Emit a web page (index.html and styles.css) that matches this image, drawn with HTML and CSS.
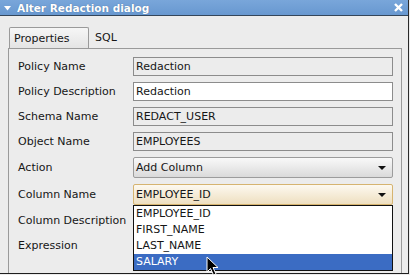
FILE: index.html
```html
<!DOCTYPE html>
<html lang="en">
    <head>
        <meta charset="utf-8" />
        <title>Alter Redaction dialog</title>
        <link rel="stylesheet" href="styles.css">
    </head>
    <body>
        <div class="window">
            <div class="titlebar">
                <svg class="tri" width="7" height="5" viewBox="0 0 7 5"><path d="M0 0H7L3.5 4.5Z" fill="#fff"/></svg>
                <span class="title">Alter Redaction dialog</span>
                <svg class="close" width="9" height="9" viewBox="0 0 9 9"><path d="M1 1L8 8M8 1L1 8" stroke="#fff" stroke-width="2.4"/></svg>
            </div>
            <div class="body">
                <div class="tabs">
                    <span class="tab active">Properties</span>
                    <span class="tab">SQL</span>
                </div>
                <div class="panel">
                    <div class="form">
                        <label>Policy Name</label>
                        <div class="field ro">Redaction</div>

                        <label>Policy Description</label>
                        <div class="field">Redaction</div>

                        <label>Schema Name</label>
                        <div class="field ro">REDACT_USER</div>

                        <label>Object Name</label>
                        <div class="field ro">EMPLOYEES</div>

                        <label>Action</label>
                        <div class="combo">Add Column<span class="arrow"></span></div>

                        <label>Column Name</label>
                        <div class="combo focus">EMPLOYEE_ID<span class="arrow"></span>
                            <ul class="list">
                                <li>EMPLOYEE_ID</li>
                                <li>FIRST_NAME</li>
                                <li>LAST_NAME</li>
                                <li class="sel">SALARY</li>
                            </ul>
                        </div>

                        <label>Column Description</label>
                        <div class="field"></div>

                        <label>Expression</label>
                        <div class="field"></div>
                    </div>
                </div>
            </div>
        </div>
        <svg class="cursor" width="13" height="20" viewBox="0 0 13 20"><path d="M1 1V16L4.5 12.5L7.5 19L10 18L7 11.5H12Z" fill="#000" stroke="#fff" stroke-width="1"/></svg>
    </body>
</html>
```

FILE: styles.css
```css
* { margin: 0; padding: 0; box-sizing: border-box; }
body { font-family: "DejaVu Sans", sans-serif; font-size: 11px; color: #161616; background: #ececec; overflow: hidden; }

.window {
    position: relative;
    width: 409px;
    height: 274px;
    background: #ececec;
    border-right: 1px solid #2a2a2a;
    border-bottom: 1px solid #1e1e1e;
    overflow: hidden; }

.titlebar {
    height: 16px;
    display: flex;
    align-items: center;
    background: linear-gradient(#79a6da, #6898d0);
    border-bottom: 1px solid #34465a;
    color: #fff; }
.titlebar .tri { margin: 1px 0 0 4px; }
.titlebar .title { margin-left: 6px; font-weight: bold; font-size: 10.5px; text-shadow: 0 0 1px #41648f; }
.titlebar .close { margin-left: auto; margin-right: 5px; }

.body { padding: 11px 0 0 8px; }

.tabs { display: flex; padding-left: 1px; height: 21px; }
.tab { padding: 4px 0 0 6px; width: 80px; }
.tab.active {
    width: 80px;
    padding-left: 4px;
    border: 1px solid #9a9a9a;
    border-bottom: none;
    border-radius: 2px 2px 0 0;
    background: linear-gradient(#f6f6f6, #e4e4e4); }
.tab + .tab { padding-left: 6px; }

.panel {
    width: 394px;
    height: 230px;
    border: 1px solid #9a9a9a;
    border-bottom: none;
    padding: 8px 7px 0 9px; }

.form {
    display: grid;
    grid-template-columns: 115px 260px;
    grid-template-rows: 19px 19px 19px 19px 21px 21px 19px 19px;
    row-gap: 6px;
    align-items: center; }
.form label { white-space: nowrap; }

.field {
    height: 19px;
    border: 1px solid #8c8c8c;
    background: #fff;
    padding: 2px 2px 0; }
.field.ro { background: #ececec; }

.combo {
    position: relative;
    height: 21px;
    border: 1px solid #9c9c9c;
    border-radius: 2px;
    padding: 3px 2px 0;
    background: linear-gradient(#f9f9f9, #dadada); }
.combo.focus {
    border-color: #d6b470;
    background: linear-gradient(#fdf9f0, #eedfc0); }
.arrow {
    position: absolute;
    right: 6px;
    top: 8px;
    border-left: 4px solid transparent;
    border-right: 4px solid transparent;
    border-top: 4px solid #111; }

.list {
    position: absolute;
    z-index: 2;
    left: -1px;
    top: 20px;
    width: 260px;
    list-style: none;
    background: #fff;
    border: 1px solid #111; }
.list li { height: 16px; padding: 1px 0 0 2px; }
.list li.sel { background: #3b6cc3; color: #fff; }

.cursor { position: absolute; left: 206px; top: 256px; z-index: 5; }
```
